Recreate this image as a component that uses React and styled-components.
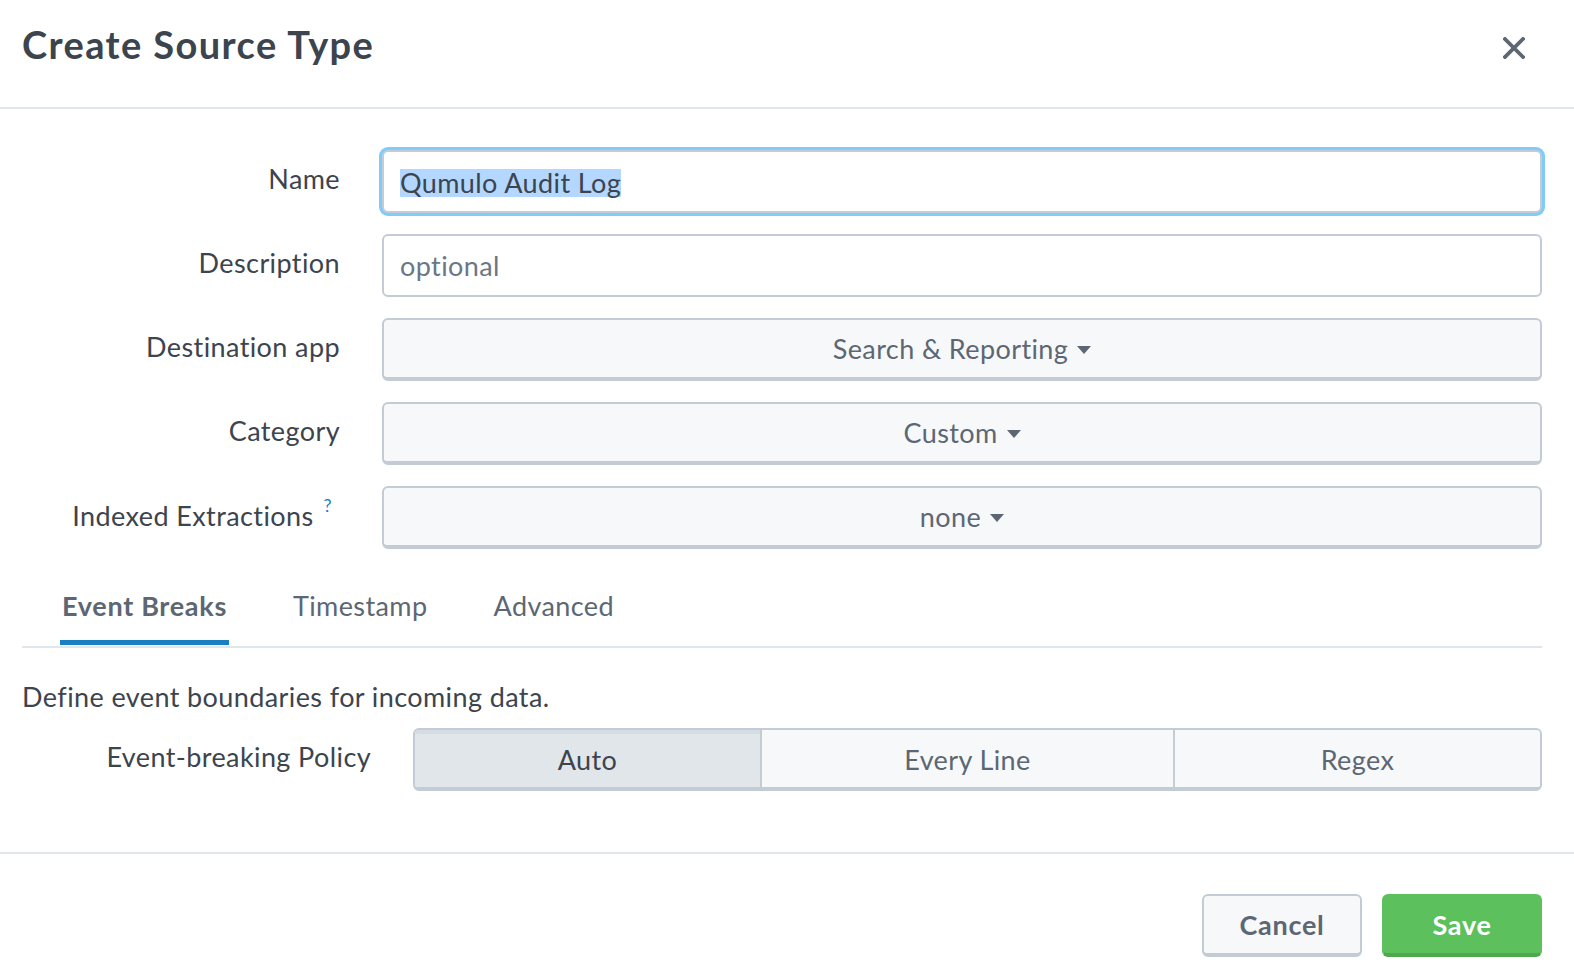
import React from "react";
import styled, { createGlobalStyle } from "styled-components";

const Global = createGlobalStyle`
  html, body { margin: 0; padding: 0; background: #fff; overflow: hidden; }
  body { font-family: Lato, "Open Sans", sans-serif; color: #3c444d; }
  * { box-sizing: border-box; }
`;

const Modal = styled.div`
  width: 100%;
  height: 100vh;
  display: flex;
  flex-direction: column;
  background: #fff;
  letter-spacing: 0.4px;
`;

const Header = styled.div`
  height: 109px;
  flex: none;
  border-bottom: 2px solid #e1e6eb;
  display: flex;
  align-items: flex-start;
  justify-content: space-between;
  padding: 21px 49px 0 22px;
`;

const Title = styled.h1`
  margin: 0;
  font-size: 38px;
  font-weight: 700;
  color: #3c444d;
  letter-spacing: 1.4px;
`;

const Close = styled.button`
  border: 0;
  background: none;
  padding: 0;
  margin-top: 16px;
  width: 22px;
  height: 22px;
  display: flex;
  cursor: pointer;
`;

const Body = styled.div`
  padding: 41px 32px 0 22px;
  display: flex;
  flex-direction: column;
`;

const Rows = styled.div`
  display: flex;
  flex-direction: column;
  gap: 21px;
`;

const Row = styled.div`
  display: flex;
  align-items: center;
  gap: 42px;
`;

const Label = styled.div`
  width: ${(p) => p.$w || 318}px;
  flex: none;
  text-align: right;
  font-size: 27px;
  color: #3c444d;
  margin-top: -6px;
  white-space: nowrap;
`;

const Help = styled.sup`
  color: #1a7fc1;
  font-size: 18px;
  margin: 0 8px 0 10px;
  position: relative;
  top: -4px;
`;

const TextBox = styled.div`
  flex: 1;
  height: 63px;
  border: 2px solid #c3cbd4;
  border-radius: 6px;
  background: #fff;
  display: flex;
  align-items: center;
  padding: 0 16px;
  font-size: 27px;
  color: ${(p) => (p.$placeholder ? "#6b7785" : "#3c444d")};
  box-shadow: ${(p) => (p.$focus ? "0 0 0 3px #7fccfb" : "none")};
`;

const Selected = styled.span`
  display: inline-block;
  background: #b3d7fe;
  line-height: 28px;
  height: 28px;
  margin-top: 2px;
`;

const Select = styled.div`
  flex: 1;
  height: 63px;
  border: 2px solid #c3cbd4;
  border-bottom-width: 4px;
  border-radius: 6px;
  background: #f7f8fa;
  display: flex;
  align-items: center;
  justify-content: center;
  gap: 9px;
  font-size: 27px;
  color: #5c6773;
`;

const Caret = styled.span`
  width: 0;
  height: 0;
  border-left: 7px solid transparent;
  border-right: 7px solid transparent;
  border-top: 8px solid #5c6773;
  margin-top: 2px;
`;

const TabBar = styled.div`
  margin-top: 40px;
  display: flex;
  gap: 62px;
  padding-left: 38px;
  border-bottom: 2px solid #e1e6eb;
`;

const Tab = styled.div`
  padding: 0 2px 18px;
  font-size: 27px;
  font-weight: ${(p) => (p.$active ? 700 : 400)};
  letter-spacing: ${(p) => (p.$active ? 0.7 : 0.4)}px;
  color: #5c6773;
  border-bottom: 5px solid ${(p) => (p.$active ? "#1a7fc1" : "transparent")};
  margin-bottom: 1px;
`;

const Intro = styled.p`
  margin: 32px 0 0;
  font-size: 27px;
  color: #3c444d;
`;

const PolicyRow = styled(Row)`
  margin-top: 15px;
`;

const Group = styled.div`
  flex: 1;
  display: grid;
  grid-template-columns: 346fr 414fr 368fr;
  height: 63px;
  border: 2px solid #c3cbd4;
  border-bottom-width: 4px;
  border-radius: 6px;
  overflow: hidden;
`;

const Seg = styled.div`
  display: flex;
  align-items: center;
  justify-content: center;
  font-size: 27px;
  padding-top: 1px;
  color: ${(p) => (p.$active ? "#3c444d" : "#5c6773")};
  background: ${(p) => (p.$active ? "#e1e6eb" : "#f7f8fa")};
  box-shadow: ${(p) => (p.$active ? "inset 0 4px 0 #d6dce3" : "none")};
  & + & {
    border-left: 2px solid #c3cbd4;
  }
`;

const Footer = styled.div`
  margin-top: auto;
  height: 124px;
  flex: none;
  border-top: 2px solid #e1e6eb;
  display: flex;
  justify-content: flex-end;
  align-items: flex-start;
  gap: 20px;
  padding: 40px 32px 0 0;
`;

const Button = styled.button`
  width: 160px;
  height: 63px;
  border-radius: 6px;
  font-family: inherit;
  font-size: 27px;
  font-weight: 700;
  letter-spacing: 0.7px;
  cursor: pointer;
  border: 2px solid ${(p) => (p.$primary ? "#5cc05c" : "#c3cbd4")};
  border-bottom: 4px solid ${(p) => (p.$primary ? "#4ea84e" : "#c3cbd4")};
  background: ${(p) => (p.$primary ? "#5cc05c" : "#f7f8fa")};
  color: ${(p) => (p.$primary ? "#fff" : "#5c6773")};
`;

export default function App() {
  return (
    <Modal>
      <Global />
      <Header>
        <Title>Create Source Type</Title>
        <Close aria-label="Close">
          <svg width="22" height="22" viewBox="0 0 22 22">
            <path d="M2 2 L20 20 M20 2 L2 20" stroke="#5c6773" strokeWidth="3.8" strokeLinecap="square" />
          </svg>
        </Close>
      </Header>
      <Body>
        <Rows>
          <Row>
            <Label>Name</Label>
            <TextBox $focus>
              <Selected>Qumulo Audit Log</Selected>
            </TextBox>
          </Row>
          <Row>
            <Label>Description</Label>
            <TextBox $placeholder>optional</TextBox>
          </Row>
          <Row>
            <Label>Destination app</Label>
            <Select>
              Search &amp; Reporting
              <Caret />
            </Select>
          </Row>
          <Row>
            <Label>Category</Label>
            <Select>
              Custom
              <Caret />
            </Select>
          </Row>
          <Row>
            <Label>
              Indexed Extractions<Help>?</Help>
            </Label>
            <Select>
              none
              <Caret />
            </Select>
          </Row>
        </Rows>
        <TabBar>
          <Tab $active>Event Breaks</Tab>
          <Tab>Timestamp</Tab>
          <Tab>Advanced</Tab>
        </TabBar>
        <Intro>Define event boundaries for incoming data.</Intro>
        <PolicyRow>
          <Label $w={349}>Event-breaking Policy</Label>
          <Group>
            <Seg $active>Auto</Seg>
            <Seg>Every Line</Seg>
            <Seg>Regex</Seg>
          </Group>
        </PolicyRow>
      </Body>
      <Footer>
        <Button>Cancel</Button>
        <Button $primary>Save</Button>
      </Footer>
    </Modal>
  );
}
